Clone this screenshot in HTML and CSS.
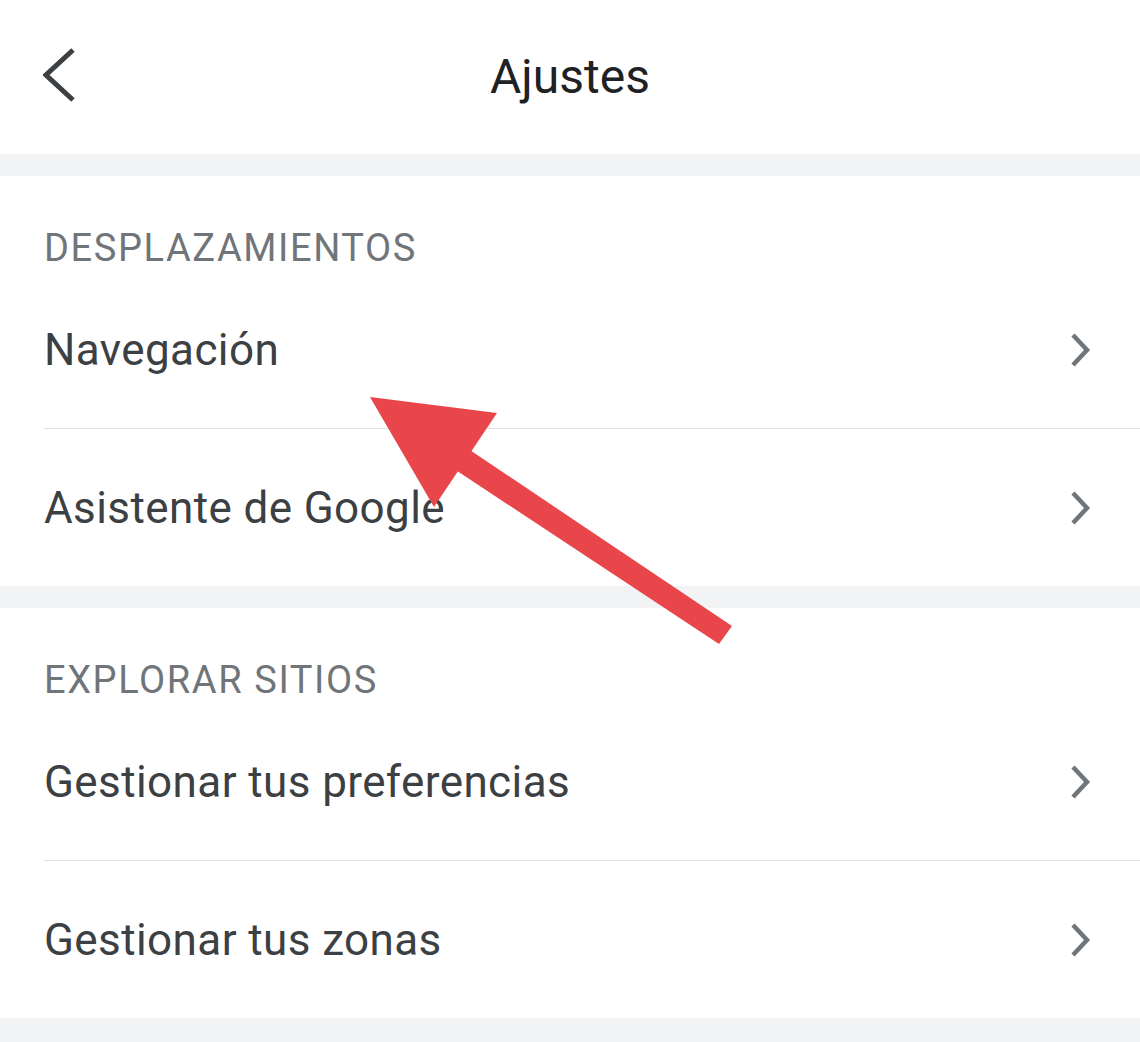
FILE: index.html
```html
<!DOCTYPE html>
<html lang="es">
<head>
<meta charset="utf-8">
<title>Ajustes</title>
<link rel="stylesheet" href="styles.css">
</head>
<body>
<div class="page">
  <header class="topbar">
    <div class="back">
      <svg width="40" height="60" viewBox="0 0 40 60"><polyline points="30,3 3,28 30,53" fill="none" stroke="#3c4043" stroke-width="5"/></svg>
    </div>
    <h1 class="title">Ajustes</h1>
    <div></div>
  </header>
  <div class="band"></div>
  <section class="section">
    <h2 class="section-title">DESPLAZAMIENTOS</h2>
    <div class="row"><span class="label">Navegación</span><svg class="chev" width="24" height="36" viewBox="0 0 24 36"><polyline points="5,3 19,18 5,33" fill="none" stroke="#70757a" stroke-width="4.5"/></svg></div>
    <div class="row"><span class="label">Asistente de Google</span><svg class="chev" width="24" height="36" viewBox="0 0 24 36"><polyline points="5,3 19,18 5,33" fill="none" stroke="#70757a" stroke-width="4.5"/></svg></div>
  </section>
  <div class="band"></div>
  <section class="section">
    <h2 class="section-title">EXPLORAR SITIOS</h2>
    <div class="row"><span class="label">Gestionar tus preferencias</span><svg class="chev" width="24" height="36" viewBox="0 0 24 36"><polyline points="5,3 19,18 5,33" fill="none" stroke="#70757a" stroke-width="4.5"/></svg></div>
    <div class="row"><span class="label">Gestionar tus zonas</span><svg class="chev" width="24" height="36" viewBox="0 0 24 36"><polyline points="5,3 19,18 5,33" fill="none" stroke="#70757a" stroke-width="4.5"/></svg></div>
  </section>
  <div class="band band-bottom"></div>
  <svg class="arrow" width="1140" height="1042" viewBox="0 0 1140 1042">
    <polygon points="446,434 732,626 719,644 433,455" fill="#e9464b"/>
    <polygon points="370,397 497,413 434,507" fill="#e9464b"/>
  </svg>
</div>
</body>
</html>
```

FILE: styles.css
```css
html, body {
  margin: 0;
  padding: 0;
  background: #ffffff;
}
.page {
  position: relative;
  width: 1140px;
  height: 1042px;
  overflow: hidden;
  font-family: Roboto, "Noto Sans", Arial, sans-serif;
}
.topbar {
  height: 154px;
  display: grid;
  grid-template-columns: 1fr auto 1fr;
  align-items: center;
}
.back {
  padding-left: 43px;
  display: flex;
  align-items: center;
  height: 60px;
}
.back svg { display: block; }
.title {
  margin: 0;
  font-weight: 400;
  font-size: 48px;
  color: #202124;
  line-height: 60px;
}
.band {
  height: 22px;
  background: #f1f3f4;
}
.band-bottom { height: 30px; }
.section-title {
  margin: 0;
  padding: 52px 0 3px 44px;
  height: 40px;
  line-height: 40px;
  font-size: 38px;
  font-weight: 400;
  color: #70757a;
  letter-spacing: 1.6px;
}
.row {
  margin-left: 44px;
  padding-right: 48px;
  height: 157px;
  display: flex;
  align-items: center;
  justify-content: space-between;
  border-bottom: 1px solid #e3e3e3;
}
.row:last-child { border-bottom: none; }
.label {
  font-size: 44px;
  color: #3c4043;
  line-height: 56px;
  letter-spacing: 0.4px;
}
.chev { display: block; }
.arrow {
  position: absolute;
  left: 0;
  top: 0;
  pointer-events: none;
}
```
